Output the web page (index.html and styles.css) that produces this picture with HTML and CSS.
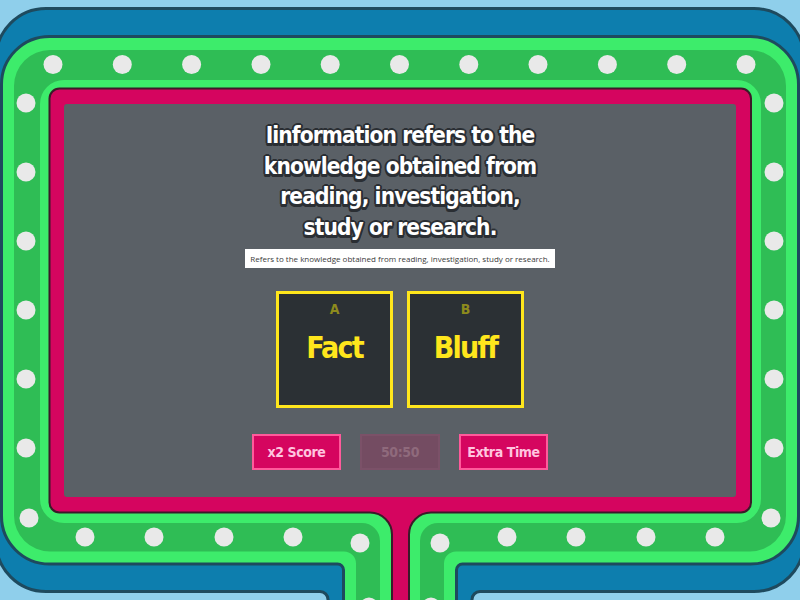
FILE: index.html
```html
<!DOCTYPE html>
<html lang="en">
<head>
<meta charset="utf-8">
<title>Gameshow quiz</title>
<link rel="stylesheet" href="styles.css">
</head>
<body>
<div class="stage">
  <svg class="frame" width="800" height="600" viewBox="0 0 800 600" aria-hidden="true">
    <path class="board" d="M 46,8.5 H 754 A 50 50 0 0 1 804,58.5 V 541.5 A 50 50 0 0 1 754,591.5 H 480 A 8 8 0 0 0 472,599.5 V 620 H 328 V 599.5 A 8 8 0 0 0 320,591.5 H 46 A 50 50 0 0 1 -4,541.5 V 58.5 A 50 50 0 0 1 46,8.5 Z"/>
    <path class="rim-outer" d="M 49.5,36.5 H 750.5 A 48 48 0 0 1 798.5,84.5 V 516 A 48 48 0 0 1 750.5,564 H 462.5 A 6 6 0 0 0 456.5,570 V 620 H 343.5 V 570 A 6 6 0 0 0 337.5,564 H 49.5 A 48 48 0 0 1 1.5,516 V 84.5 A 48 48 0 0 1 49.5,36.5 Z"/>
    <path class="rim-mid" d="M 50,50 H 750 A 36 36 0 0 1 786,86 V 515.5 A 36 36 0 0 1 750,551.5 H 456 A 12 12 0 0 0 444,563.5 V 620 H 356 V 563.5 A 12 12 0 0 0 344,551.5 H 50 A 36 36 0 0 1 14,515.5 V 86 A 36 36 0 0 1 50,50 Z"/>
    <path class="rim-inner" d="M 64,80 H 737 A 24 24 0 0 1 761,104 V 499 A 24 24 0 0 1 737,523 H 438 A 18 18 0 0 0 420,541 V 620 H 380 V 541 A 18 18 0 0 0 362,523 H 64 A 24 24 0 0 1 40,499 V 104 A 24 24 0 0 1 64,80 Z"/>
    <path class="bezel" d="M 59.5,88.5 H 741 A 10 10 0 0 1 751,98.5 V 502.5 A 10 10 0 0 1 741,512.5 H 431 A 22 22 0 0 0 409,534.5 V 620 H 392 V 534.5 A 22 22 0 0 0 370,512.5 H 59.5 A 10 10 0 0 1 49.5,502.5 V 98.5 A 10 10 0 0 1 59.5,88.5 Z"/>
    <g class="bulbs">
      <circle cx="53" cy="64.5" r="9.5"/><circle cx="122.3" cy="64.5" r="9.5"/><circle cx="191.6" cy="64.5" r="9.5"/><circle cx="261" cy="64.5" r="9.5"/><circle cx="330.2" cy="64.5" r="9.5"/><circle cx="399.5" cy="64.5" r="9.5"/><circle cx="468.8" cy="64.5" r="9.5"/><circle cx="538" cy="64.5" r="9.5"/><circle cx="607.4" cy="64.5" r="9.5"/><circle cx="676.7" cy="64.5" r="9.5"/><circle cx="746" cy="64.5" r="9.5"/>
      <circle cx="26" cy="103" r="9.5"/><circle cx="26" cy="172" r="9.5"/><circle cx="26" cy="241" r="9.5"/><circle cx="26" cy="310" r="9.5"/><circle cx="26" cy="379" r="9.5"/><circle cx="26" cy="448" r="9.5"/>
      <circle cx="774" cy="103" r="9.5"/><circle cx="774" cy="172" r="9.5"/><circle cx="774" cy="241" r="9.5"/><circle cx="774" cy="310" r="9.5"/><circle cx="774" cy="379" r="9.5"/><circle cx="774" cy="448" r="9.5"/>
      <circle cx="29" cy="518" r="9.5"/><circle cx="771" cy="518" r="9.5"/>
      <circle cx="85" cy="537" r="9.5"/><circle cx="154" cy="537" r="9.5"/><circle cx="224" cy="537" r="9.5"/><circle cx="293" cy="537" r="9.5"/><circle cx="360" cy="543" r="9.5"/>
      <circle cx="440" cy="543" r="9.5"/><circle cx="507" cy="537" r="9.5"/><circle cx="576" cy="537" r="9.5"/><circle cx="646" cy="537" r="9.5"/><circle cx="715" cy="537" r="9.5"/>
      <circle cx="369" cy="607" r="9.5"/><circle cx="431" cy="607" r="9.5"/>
    </g>
  </svg>

  <main class="screen">
    <h1 class="question">Iinformation refers to the<br>knowledge obtained from<br>reading, investigation,<br>study or research.</h1>
    <p class="hint">Refers to the knowledge obtained from reading, investigation, study or research.</p>
    <div class="answers">
      <div class="answer"><span class="letter">A</span><span class="word">Fact</span></div>
      <div class="answer"><span class="letter">B</span><span class="word">Bluff</span></div>
    </div>
    <div class="powerups">
      <button class="btn">x2 Score</button>
      <button class="btn btn-off">50:50</button>
      <button class="btn">Extra Time</button>
    </div>
  </main>
</div>
</body>
</html>
```

FILE: styles.css
```css
html, body {
  margin: 0;
  padding: 0;
}

body {
  background: #8fcfeb;
  font-family: "DejaVu Sans Condensed", "DejaVu Sans", sans-serif;
}

.stage {
  position: relative;
  width: 800px;
  height: 600px;
  overflow: hidden;
  padding: 104px 64px 0;
  box-sizing: border-box;
}

.frame {
  position: absolute;
  left: 0;
  top: 0;
  z-index: 0;
}

.board {
  fill: #0d7eae;
  stroke: #1e4a5e;
  stroke-width: 3;
}

.rim-outer {
  fill: #3dec6b;
  stroke: #1e4a5e;
  stroke-width: 3;
}

.rim-mid {
  fill: #2fbd55;
}

.rim-inner {
  fill: #3dec6b;
}

.bezel {
  fill: #d5055f;
  stroke: #3b1b29;
  stroke-width: 2;
}

.bulbs circle {
  fill: #e9e9e9;
}

.screen {
  position: relative;
  z-index: 1;
  width: 672px;
  height: 393px;
  box-sizing: border-box;
  padding-top: 16px;
  background: #5a6066;
  border-radius: 3px;
  display: flex;
  flex-direction: column;
  align-items: center;
}

.question {
  margin: 0;
  font-family: "DejaVu Sans Condensed", "DejaVu Sans", sans-serif;
  font-weight: 700;
  font-size: 22.5px;
  letter-spacing: -0.9px;
  line-height: 30.7px;
  color: #ffffff;
  text-align: center;
  text-shadow:
    2px 0 0 #2a2e33, -2px 0 0 #2a2e33, 0 2px 0 #2a2e33, 0 -2px 0 #2a2e33,
    1.5px 1.5px 0 #2a2e33, -1.5px 1.5px 0 #2a2e33, 1.5px -1.5px 0 #2a2e33, -1.5px -1.5px 0 #2a2e33,
    0 3px 0 #2a2e33, 1px 3px 0 #2a2e33, -1px 3px 0 #2a2e33;
}

.hint {
  margin: 6px 0 0;
  height: 19px;
  padding: 0 5px;
  background: #ffffff;
  color: #3a3a3a;
  font-family: "Open Sans", "Liberation Sans", sans-serif;
  font-size: 8px;
  line-height: 19px;
  white-space: nowrap;
}

.answers {
  margin-top: 23px;
  display: flex;
  gap: 14px;
}

.answer {
  width: 117px;
  height: 117px;
  box-sizing: border-box;
  border: 3px solid #ffe61c;
  background: #2b3034;
  display: flex;
  flex-direction: column;
  align-items: center;
}

.letter {
  margin-top: 7px;
  font-size: 14px;
  line-height: 16px;
  font-weight: 700;
  color: #8e8b1d;
}

.word {
  margin-top: 12px;
  font-size: 30px;
  letter-spacing: -1.8px;
  line-height: 38px;
  font-weight: 700;
  color: #ffe61c;
}

.powerups {
  margin-top: 26px;
  display: flex;
  gap: 19px;
}

.btn {
  width: 89px;
  height: 36px;
  padding: 0;
  box-sizing: border-box;
  background: #d5055f;
  border: 2px solid #ff5a9b;
  color: #ffc4df;
  font-family: "DejaVu Sans Condensed", "DejaVu Sans", sans-serif;
  font-weight: 700;
  font-size: 14px;
  letter-spacing: -0.4px;
  white-space: nowrap;
  cursor: pointer;
}

.btn-off {
  width: 80px;
  background: #744c62;
  border-color: #7b5168;
  color: #8f6a7c;
}
```
